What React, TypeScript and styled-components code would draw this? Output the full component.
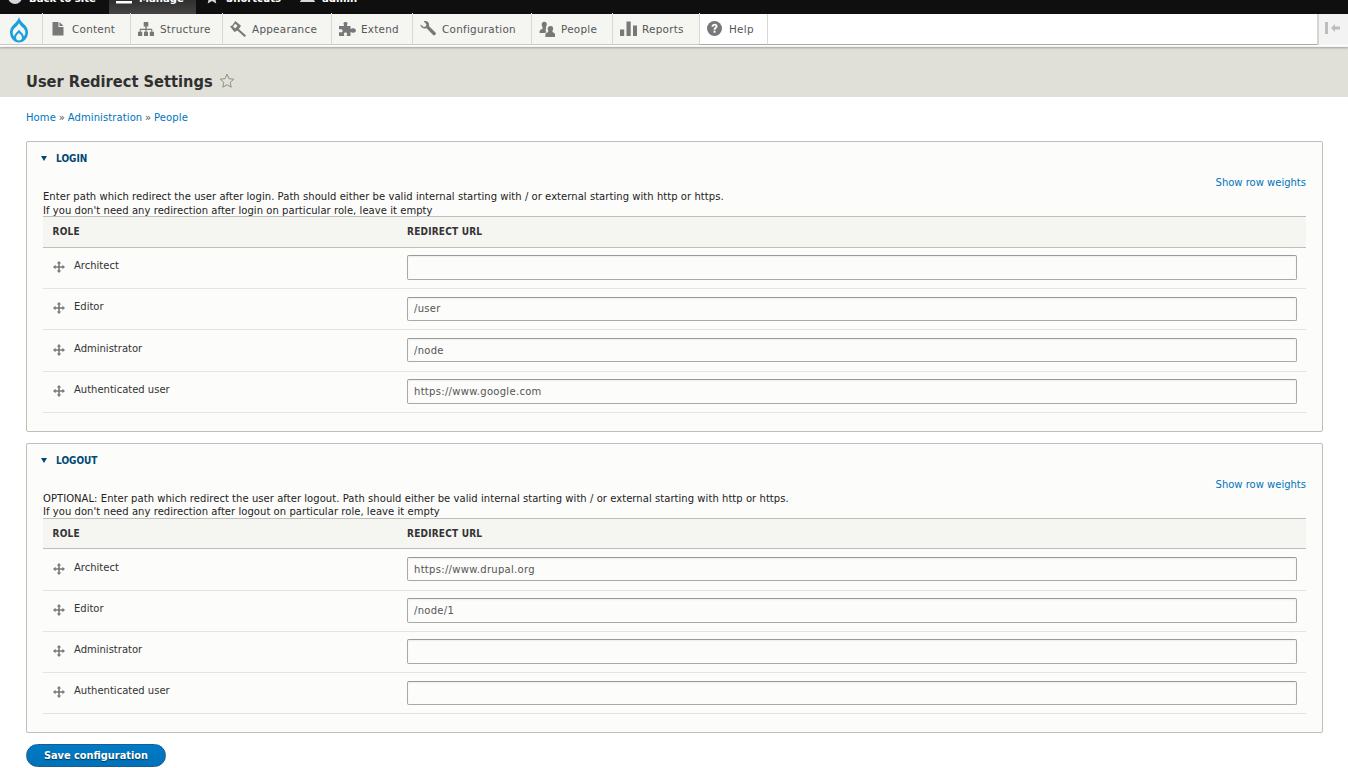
import React from "react";
import styled, { createGlobalStyle } from "styled-components";

const Global = createGlobalStyle`
  html, body { margin: 0; padding: 0; background: #fff; }
  body { font-family: "DejaVu Sans", sans-serif; color: #222330; font-size: 10px; overflow: hidden; height: 768px; }
  * { box-sizing: border-box; }
`;

const Page = styled.div`width: 1348px; height: 768px; overflow: hidden;`;
const BlackBar = styled.div`height: 14px; background: #0f0f0f; overflow: hidden;`;
const BlackInner = styled.nav`
  height: 39px; margin-top: -23px; display: flex; align-items: center;
  color: #fff; font-size: 11.200px; font-weight: 700; font-stretch: condensed; padding-left: 8px; white-space: nowrap;
`;
const BlackItem = styled.a<{ $w: number; $pad?: number; $active?: boolean }>`
  display: flex; align-items: center; gap: 7px; height: 39px; width: ${p => p.$w}px;
  padding-left: ${p => p.$pad ?? 0}px;
  background: ${p => (p.$active ? "linear-gradient(#1c1c1c, #303030 60%, #474747)" : "none")};
  svg { flex: none; }
`;
const BlackLabel = styled.span`position: relative; top: 2px;`;
const Tray = styled.div`
  height: 33px; display: flex; background: #fff; position: relative;
  box-shadow: 0 1px 2px rgba(0,0,0,.28);
  border-bottom: 1px solid #f2f2ef;
`;
const Logo = styled.a`
  width: 42px; height: 31px; background: #f5f5f2; border-bottom: 1px solid #c9c9c5;
  display: flex; align-items: flex-start; padding: 3px 0 0 9px;
`;
const Tab = styled.a<{ $w: number; $active?: boolean }>`
  width: ${p => p.$w}px; height: 31px; display: flex; align-items: center; position: relative;
  background: ${p => (p.$active ? "#fff" : "#f5f5f2")};
  border-bottom: 1px solid ${p => (p.$active ? "#a8a8a6" : "#c9c9c5")};
  border-left: 1px solid #d8d8d4; color: #565656; font-size: 10.4px; letter-spacing: .27px;
  &::before { content: ""; position: absolute; left: -1px; top: -1px; width: 1px; height: 1px; background: #d8d8d4; }
  svg { flex: none; }
`;
const TabIcon = styled.span`width: 29px; padding-left: 7px; display: flex; align-items: center; height: 100%; padding-bottom: 1px;`;
const TabFill = styled.div`
  flex: 1; height: 31px; border-left: 1px solid #d8d8d4; border-bottom: 1px solid #a8a8a6; background: #fff;
`;
const Toggle = styled.button`
  width: 31px; height: 31px; background: #f3f3f3; border: 0; border-left: 2px solid #d5d5d3; border-bottom: 0;
  padding: 0 0 3px 6px; display: flex; align-items: center;
`;
const Head = styled.header`
  height: 50px; background: #e0e0d8; padding: 19px 26px 0; display: flex; align-items: center; gap: 6px;
`;
const Title = styled.h1`
  margin: 0; font-size: 16.3px; line-height: 20px; font-weight: 700; color: #303030; font-stretch: condensed;
`;
const FavStar = styled.svg`width: 16px; height: 16px; flex: none; margin-bottom: 2px;`;
const Content = styled.main`padding: 0 25px 0 26px;`;
const Crumbs = styled.div`
  height: 44.400px; padding-top: 14px; font-size: 10px; line-height: 13px; color: #555; letter-spacing: .1px; word-spacing: -.5px;
  a { color: #0074bd; }
`;
const Fieldset = styled.section`
  height: 290.3px; margin-bottom: 11.100px; border: 1px solid #bfbfba; border-radius: 2px; background: #fcfcfa;
  padding: 0 16px;
`;
const Legend = styled.h2`
  margin: 0 0 0 -2px; height: 33px; display: flex; align-items: center; gap: 9px;
  font-size: 10px; font-weight: 700; color: #004875; text-transform: uppercase; line-height: 13px; font-stretch: condensed;
  padding: .6px 0 .4px;
`;
const Caret = styled.svg`width: 6px; height: 5px; flex: none;`;
const WeightsLine = styled.div`
  height: 15px; margin-top: 1px; text-align: right; font-size: 10px; line-height: 13px;
  a { color: #0074bd; }
`;
const Desc = styled.p`
  margin: -1px 0 0; height: 27px; font-size: 10px; line-height: 13.700px; color: #222; letter-spacing: .05px;
`;
const Table = styled.table`
  width: 100%; border-collapse: collapse; table-layout: fixed; margin-top: -1px;
`;
const Th = styled.th<{ $w?: number }>`
  height: 30.600px; width: ${p => (p.$w ? `${p.$w}px` : "auto")}; background: #f5f5f2; text-align: left; padding: 0 10px 1px 9.500px;
  text-transform: uppercase; font-size: 10px; font-weight: 700; color: #333; font-stretch: condensed; letter-spacing: .2px;
  border-top: 1px solid #bfbfba; border-bottom: 1px solid #bfbfba;
`;
const Row = styled.tr`border-bottom: 1px solid #e6e4df; height: 41.25px;`;
const RoleCell = styled.td`padding: 0 10px 5px; font-size: 10px; color: #333;`;
const RoleWrap = styled.div`display: flex; align-items: center; gap: 9px;`;
const Handle = styled.svg`width: 12px; height: 12px; flex: none; margin-top: 3px;`;
const InputCell = styled.td`padding: 0 0 0 9.500px;`;
const UrlInput = styled.input`
  display: block; width: 890px; height: 24.500px; margin-top: -1px; border: 1px solid #a8a8a8; border-top-color: #999;
  border-radius: 2px; background: #fcfcfa; padding: 0 6px;
  font: 10px "DejaVu Sans", sans-serif; color: #555; letter-spacing: .3px; outline: 0;
  box-shadow: inset 0 1px 2px rgba(0,0,0,.06);
`;
const Save = styled.button`
  display: block; width: 140px; height: 23px; border-radius: 20px; border: 1px solid #1e5c90;
  background: linear-gradient(#007bc6, #0071b8); color: #fff; font: 700 10.900px "DejaVu Sans", sans-serif; font-stretch: condensed;
  text-shadow: 0 1px 1px rgba(0,0,0,.6); padding: 0 0 1px;
`;

const icons: Record<string, { w: number; h: number; d: React.ReactNode }> = {
  content: { w: 16, h: 16, d: <path d="M2.500 1H8.500V6H13.500V14.500H2.500ZM9.500 1 13.500 5H9.500Z" /> },
  structure: {
    w: 16, h: 16,
    d: <path d="M5.700 1h4.600v4.600H8.700v2.200H14.300v3H16V15h-4.200v-4.200h1.500V8.900H8.600v1.900H10V15H6v-4.200h1.400V8.900H2.700v1.900h1.500V15H0v-4.200h1.700v-3h5.600V5.600H5.700z" />,
  },
  appearance: {
    w: 16, h: 16,
    d: <path fillRule="evenodd" d="M5.300 0 11 4.800 8.800 8 16 14.400 14.600 16 7.400 9.400 4.400 11 0 5.300l2.200-.9zM5.200 2.700 3 5.400l2.100 2.200 2.500-2.800z" />,
  },
  extend: {
    w: 17, h: 16,
    d: <path d="M0 5h5V3.800C4 2.300 4.500 1 6.500 1S9 2.300 8 3.800V5h3.500v3.200c1-.9 2.300-1.200 3.700-.8 2.300.7 2.300 3.400 0 4.100-1.400.4-2.700.1-3.700-.8V15H7.800v-1.300c.8-1 .1-2.200-1.300-2.200s-2.100 1.200-1.300 2.200V15H0v-3.700h1.300c1.100.5 2.300-.2 2.300-1.500S2.400 7.800 1.300 8.300H0z" />,
  },
  configuration: {
    w: 16, h: 16,
    d: <path d="M.7 3.400 3.500 6l2.300-.5.6-2.300L3.700.5C6-.7 9.200.6 9.100 3.700c0 .5-.1 1-.2 1.400l6.600 6.500c1.300 1.300-1 3.700-2.400 2.300L6.600 7.300C3.400 8.200-.3 6.400.7 3.400z" />,
  },
  people: {
    w: 16, h: 16,
    d: <path d="M5.300.8c1.900 0 2.700 1.400 2.500 3-.1 1-.7 1.700-.9 2.400-.1.400 0 .7.300 1-.5.700-.7 1.500-.5 2.500.2.600.4 1 .7 1.400-.5.300-1 .5-1.400.9H.6V10c0-1.200 2.800-1.700 3.100-2.700.2-.8-.8-1.600-1-3.200C2.500 2.300 3.400.8 5.300.8zM11.700 5c1.800 0 2.600 1.300 2.400 2.900-.1 1-.7 1.700-.7 2.500 0 1 2.600 1.400 2.600 2.600V16H6.400v-3c0-1.200 2.700-1.600 2.900-2.600.1-.8-.5-1.500-.6-2.500C8.500 6.300 9.900 5 11.700 5z" />,
  },
  reports: { w: 17, h: 16, d: <path d="M0 8.500h4.200V15H0zM6.500.5h4.200V15H6.500zM13 4.500h4V15h-4z" /> },
};

const HelpIcon = () => (
  <svg width="15" height="15" viewBox="0 0 16 16">
    <circle cx="8" cy="8" r="8" fill="#787878" />
    <path d="M4.800 6C5 3.800 6.700 2.900 8.200 2.900c1.800 0 3.100 1.100 3.100 2.600 0 2-2.200 2.200-2.200 3.900H7c0-2.500 2.100-2.700 2.100-3.800 0-.5-.4-.9-1-.9-.7 0-1.100.5-1.200 1.300z" fill="#fff" />
    <rect x="7" y="10.300" width="2.100" height="2.200" fill="#fff" />
  </svg>
);

const DrupalLogo = () => (
  <svg width="20" height="26" viewBox="0 0 20 26">
    <path d="M10 0c1 3.800 3.300 5.400 5.300 7.400 2 2 3.700 4.300 3.700 7.800C19 21 15 25.500 10 25.500S1 21 1 15.200c0-3.500 1.700-5.800 3.700-7.800 2-2 4.300-3.600 5.300-7.400z" fill="#1a9fdf" />
    <path d="M10 6c.9 2.100 2.400 3.300 3.800 4.600 1.500 1.400 2.500 2.900 2.500 4.900 0 1.600-.5 2.900-1.400 3.900-.4-2.100-1.900-3.500-3.400-5L10 12.800l-1.500 1.600c-1.500 1.500-3 2.900-3.400 5-.9-1-1.400-2.300-1.400-3.900 0-2 1-3.500 2.500-4.900C7.600 9.300 9.100 8.100 10 6z" fill="#f5f5f2" />
    <path d="M10 16c1.400 1.400 3 2.600 3 4.500 0 1.800-1.300 3-3 3s-3-1.200-3-3c0-1.900 1.600-3.100 3-4.500z" fill="#f5f5f2" />
  </svg>
);

const DragHandle = () => (
  <Handle viewBox="0 0 12 12" fill="#787878">
    <path d="M6 0 8.200 2.600H6.800v2.600h2.600V3.800L12 6 9.400 8.200V6.800H6.800v2.600h1.400L6 12 3.800 9.400h1.400V6.800H2.600v1.400L0 6l2.600-2.200v1.400h2.600V2.600H3.800z" />
  </Handle>
);

const tabs = [
  { key: "content", label: "Content", w: 88 },
  { key: "structure", label: "Structure", w: 92 },
  { key: "appearance", label: "Appearance", w: 109 },
  { key: "extend", label: "Extend", w: 81 },
  { key: "configuration", label: "Configuration", w: 119 },
  { key: "people", label: "People", w: 81 },
  { key: "reports", label: "Reports", w: 87 },
];

type RowData = { role: string; url: string };
const login: RowData[] = [
  { role: "Architect", url: "" },
  { role: "Editor", url: "/user" },
  { role: "Administrator", url: "/node" },
  { role: "Authenticated user", url: "https://www.google.com" },
];
const logout: RowData[] = [
  { role: "Architect", url: "https://www.drupal.org" },
  { role: "Editor", url: "/node/1" },
  { role: "Administrator", url: "" },
  { role: "Authenticated user", url: "" },
];

const Panel: React.FC<{ title: string; line1: string; line2: string; rows: RowData[] }> = ({ title, line1, line2, rows }) => (
  <Fieldset>
    <Legend>
      <Caret viewBox="0 0 6 5"><path d="M0 0h6L3 5z" fill="#004875" /></Caret>
      {title}
    </Legend>
    <WeightsLine><a>Show row weights</a></WeightsLine>
    <Desc>{line1}<br />{line2}</Desc>
    <Table>
      <thead>
        <tr><Th $w={354.5}>Role</Th><Th>Redirect URL</Th></tr>
      </thead>
      <tbody>
        {rows.map(r => (
          <Row key={r.role}>
            <RoleCell><RoleWrap><DragHandle />{r.role}</RoleWrap></RoleCell>
            <InputCell><UrlInput defaultValue={r.url} /></InputCell>
          </Row>
        ))}
      </tbody>
    </Table>
  </Fieldset>
);

export default function App() {
  return (
    <Page>
      <Global />
      <BlackBar>
        <BlackInner>
          <BlackItem $w={101}>
            <svg width="14" height="14" viewBox="0 0 14 14"><circle cx="7" cy="7" r="7" fill="#d8d8d8" /></svg>
            <BlackLabel>Back to site</BlackLabel>
          </BlackItem>
          <BlackItem $w={87} $pad={7} $active>
            <svg width="16" height="14" viewBox="0 0 16 14" fill="#fff"><rect y="0" width="16" height="2" /><rect y="5" width="16" height="2" /><rect y="11" width="16" height="2.500" /></svg>
            <BlackLabel>Manage</BlackLabel>
          </BlackItem>
          <BlackItem $w={104} $pad={9}>
            <svg width="14" height="14" viewBox="0 0 14 14" fill="#d8d8d8"><path d="M7 0l2 4.600 5 .5-3.800 3.300 1.100 5L7 11l-4.300 2.400 1.100-5L0 5.100l5-.5z" /></svg>
            <BlackLabel>Shortcuts</BlackLabel>
          </BlackItem>
          <BlackItem $w={70}>
            <svg width="15" height="14" viewBox="0 0 15 14" fill="#d8d8d8"><path d="M7.500 0c2 0 3 1.500 3 3.500 0 1.500-1 3-1.500 3.800 0 1 6 2 6 4.700H0c0-2.700 6-3.700 6-4.700C5.500 6.500 4.500 5 4.500 3.500c0-2 1-3.500 3-3.500z" /></svg>
            <BlackLabel>admin</BlackLabel>
          </BlackItem>
        </BlackInner>
      </BlackBar>
      <Tray>
        <Logo><DrupalLogo /></Logo>
        {tabs.map(t => {
          const ic = icons[t.key];
          return (
            <Tab key={t.key} $w={t.w}>
              <TabIcon>
                <svg width={ic.w} height={ic.h} viewBox={`0 0 ${ic.w} ${ic.h}`} fill="#787878">{ic.d}</svg>
              </TabIcon>
              {t.label}
            </Tab>
          );
        })}
        <Tab $w={68} $active>
          <TabIcon><HelpIcon /></TabIcon>
          Help
        </Tab>
        <TabFill />
        <Toggle aria-label="Collapse">
          <svg width="16" height="12" viewBox="0 0 16 12" fill="#bdbdbd"><rect x="0" y="0" width="3" height="12" /><path d="M6 6l4-4v2.500h5v3h-5V10z" /></svg>
        </Toggle>
      </Tray>
      <Head>
        <Title>User Redirect Settings</Title>
        <FavStar viewBox="0 0 16 16" fill="none" stroke="#8f8f84" strokeWidth="1"><path d="M8 1.200l2 4.500 4.800.5-3.600 3.200 1 4.800L8 11.800l-4.200 2.400 1-4.800L1.200 6.200 6 5.700z" /></FavStar>
      </Head>
      <Content>
        <Crumbs><a>Home</a> » <a>Administration</a> » <a>People</a></Crumbs>
        <Panel
          title="Login"
          line1="Enter path which redirect the user after login. Path should either be valid internal starting with / or external starting with http or https."
          line2="If you don't need any redirection after login on particular role, leave it empty"
          rows={login}
        />
        <Panel
          title="Logout"
          line1="OPTIONAL: Enter path which redirect the user after logout. Path should either be valid internal starting with / or external starting with http or https."
          line2="If you don't need any redirection after logout on particular role, leave it empty"
          rows={logout}
        />
        <Save>Save configuration</Save>
      </Content>
    </Page>
  );
}
